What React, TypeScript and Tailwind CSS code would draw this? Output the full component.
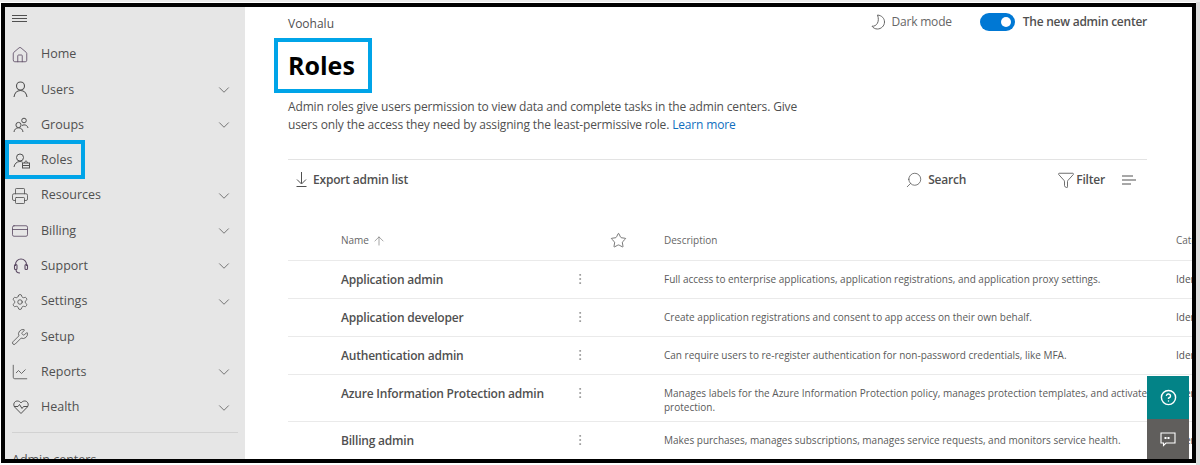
import { ArrowUp, ChevronDown, CircleHelp, CreditCard, Filter, Home, LineChart, MoreVertical, Printer, Search, Settings, Star, Wrench } from "lucide-react"
import type { ReactNode } from "react"

const font = "font-['Open_Sans',sans-serif]"

function UserIcon() {
  return (
    <svg width="16" height="17" viewBox="0 0 16 17" fill="none" stroke="currentColor" strokeWidth="1.100">
      <circle cx="7.500" cy="5" r="4" />
      <path d="M1 16c.4-3.800 3-6.500 6.500-6.500S13.600 12.200 14 16" />
    </svg>
  )
}

function GroupsIcon() {
  return (
    <svg width="16" height="16" viewBox="0 0 16 16" fill="none" stroke="currentColor" strokeWidth="1">
      <circle cx="5.500" cy="8" r="2.600" />
      <path d="M1 15c.3-2.600 2-4.200 4.500-4.200S9.700 12.400 10 15" />
      <circle cx="11" cy="3.500" r="2.300" />
      <path d="M9 8.500c2.800-1.400 5.400-.3 6 2.500" />
    </svg>
  )
}

function RolesIcon() {
  return (
    <svg width="18" height="16" viewBox="0 0 18 16" fill="none" stroke="currentColor" strokeWidth="1">
      <circle cx="7" cy="4.500" r="3.500" />
      <path d="M1 14c.5-3.200 2.700-5.500 6-5.500 1 0 1.800.2 2.500.6" />
      <rect x="9.500" y="10" width="7" height="5" />
      <path d="M9.500 12.500h7" />
      <path d="M11.500 10c0-2.500 3-2.500 3 0" />
    </svg>
  )
}

function SupportIcon() {
  return (
    <svg width="16" height="17" viewBox="0 0 16 17" fill="none" stroke="#5b4a63" strokeWidth="1.100">
      <path d="M2.500 8V6.500a5.500 5.500 0 0 1 11 0V8" />
      <rect x="1.500" y="6.500" width="2.500" height="5" rx="1" />
      <rect x="12" y="6.500" width="2.500" height="5" rx="1" />
      <path d="M3 11.500c0 2.500 1.500 3.500 4 3.500" />
    </svg>
  )
}

function HealthIcon() {
  return (
    <svg width="16" height="15" viewBox="0 0 16 15" fill="none" stroke="currentColor" strokeWidth="1">
      <path d="M8 13.500 1.800 7.200C-.4 4.600 1.300 1 4.300 1 6 1 7.200 1.900 8 3c.8-1.100 2-2 3.700-2 3 0 4.700 3.600 2.500 6.200z" />
      <path d="M1 6.500h4l1.500-2 2.500 4 1.500-2H15" />
    </svg>
  )
}

function MoonIcon() {
  return (
    <svg width="15" height="16" viewBox="0 0 15 16" fill="none" stroke="currentColor" strokeWidth="1">
      <path d="M6.500 1c4.500.5 7 3.500 7 7 0 4-3.500 7-7 7-2.300 0-4.300-1-5.500-2.800 4.500.5 8-4.500 5.500-11.200z" />
    </svg>
  )
}

function FeedbackIcon() {
  return (
    <svg width="16" height="16" viewBox="0 0 16 16" fill="none" stroke="white" strokeWidth="1.100">
      <path d="M1 2h14v10H6l-2.500 2.500V12H1z" />
      <path d="M5.500 6v2M8.500 6v2" strokeWidth="2" />
    </svg>
  )
}

function HamburgerIcon() {
  return (
    <svg width="15" height="8" viewBox="0 0 15 8" stroke="currentColor" strokeWidth="1">
      <path d="M0 .5h15M0 3.500h15M0 6.500h15" />
    </svg>
  )
}

function SortIcon() {
  return (
    <svg width="15" height="10" viewBox="0 0 15 10" stroke="currentColor" strokeWidth="1">
      <path d="M0 1h11M0 5h14M0 9h9" />
    </svg>
  )
}

function ExportIcon() {
  return (
    <svg width="11" height="15" viewBox="0 0 11 15" fill="none" stroke="currentColor" strokeWidth="1">
      <path d="M5.500 0v11.500M1 7.500l4.500 4.500L10 7.500M.5 14.500h10" />
    </svg>
  )
}

const icon = { size: 18, strokeWidth: 1.1 }

const navItems: { label: string; icon: ReactNode; chevron?: boolean }[] = [
  { label: "Home", icon: <Home {...icon} className="-ml-[2px] text-[#5b4a63]" /> },
  { label: "Users", icon: <UserIcon />, chevron: true },
  { label: "Groups", icon: <GroupsIcon />, chevron: true },
  { label: "Roles", icon: <RolesIcon /> },
  { label: "Resources", icon: <Printer {...icon} className="-ml-[2px]" />, chevron: true },
  { label: "Billing", icon: <CreditCard {...icon} className="-ml-[2px] text-[#5b4a63]" />, chevron: true },
  { label: "Support", icon: <SupportIcon />, chevron: true },
  { label: "Settings", icon: <Settings {...icon} className="-ml-[2px]" />, chevron: true },
  { label: "Setup", icon: <Wrench {...icon} className="-ml-[2px]" /> },
  { label: "Reports", icon: <LineChart {...icon} className="-ml-[2px]" />, chevron: true },
  { label: "Health", icon: <HealthIcon />, chevron: true },
]

const rows = [
  { name: "Application admin", desc: "Full access to enterprise applications, application registrations, and application proxy settings.", h: "h-[38px]" },
  { name: "Application developer", desc: "Create application registrations and consent to app access on their own behalf.", h: "h-[38px]" },
  { name: "Authentication admin", desc: "Can require users to re-register authentication for non-password credentials, like MFA.", h: "h-[38px]" },
  { name: "Azure Information Protection admin", desc: "Manages labels for the Azure Information Protection policy, manages protection templates, and activate protection.", h: "h-[47px]" },
  { name: "Billing admin", desc: "Makes purchases, manages subscriptions, manages service requests, and monitors service health.", h: "h-[38px]" },
]

function Sidebar() {
  return (
    <aside className="flex w-[240px] shrink-0 flex-col bg-[#e6e6e6] text-[#505050]">
      <div className="flex h-[30px] shrink-0 items-center pb-[6px] pl-[7px]">
        <HamburgerIcon />
      </div>
      {navItems.map((item) => (
        <div key={item.label} className="relative flex h-[35.3px] shrink-0 items-center pl-[8px] pr-[12px]">
          <span className="flex w-[28px] shrink-0">{item.icon}</span>
          <span className="flex-1 text-[12.5px]">{item.label}</span>
          {item.chevron && <ChevronDown size={18} strokeWidth={1} />}
          {item.label === "Roles" && <span className="absolute left-0 top-[-3px] h-[39px] w-[80px] border-[4px] border-[#00a4e8]" />}
        </div>
      ))}
      <div className="mx-[7px] mt-[7px] shrink-0 border-t border-[#d2d2d2]" />
      <div className="mt-[18px] shrink-0 pl-[7px] text-[12.5px]">Admin centers</div>
    </aside>
  )
}

function RoleTable() {
  return (
    <div className="mt-[22px] text-[#505050]">
      <div className="grid h-[40px] grid-cols-[53px_270px_53px_512px_1fr] items-center border-b border-[#eaeaea] text-[10px] text-[#666]">
        <span />
        <span className="flex items-center gap-[3px]">Name <ArrowUp size={14} strokeWidth={1} /></span>
        <Star size={17} strokeWidth={1} className="-ml-[1px] text-[#444]" />
        <span>Description</span>
        <span>Category</span>
      </div>
      {rows.map((row) => (
        <div key={row.name} className={`grid ${row.h} grid-cols-[53px_235px_88px_512px_1fr] items-start border-b border-[#eaeaea]`}>
          <span />
          <span className="pt-[11px] text-[12px] leading-[16px] font-semibold tracking-[-0.2px]">{row.name}</span>
          <span className="pt-[11px]"><MoreVertical size={14} strokeWidth={1} className="-ml-[3px] text-[#777]" /></span>
          <span className="pr-[6px] pt-[11px] text-[10px] leading-[14px] text-[#5a5a5a]">{row.desc}</span>
          <span className="overflow-hidden pt-[11px] text-[10px] leading-[14px]">Identity</span>
        </div>
      ))}
    </div>
  )
}

export default function App() {
  return (
    <div className={`${font} flex h-[465px] w-[1200px] overflow-hidden border-t-[2px] border-[#ececec] bg-white`}>
      <div className="ml-[1px] mt-[1px] flex h-[460px] w-[1195px] shrink-0 overflow-hidden border-[4px] border-black">
        <Sidebar />
        <main className="relative min-w-0 flex-1 pl-[43px] text-[#505050]">
          <div className="flex h-[29px] items-center pr-[45px]">
            <span className="mt-[4px] flex-1 text-[12px] font-medium">Voohalu</span>
            <span className="flex items-center gap-[6px] text-[12px] tracking-[-0.2px] text-[#666]"><MoonIcon /> Dark mode</span>
            <span className="ml-[28px] flex h-[18px] w-[35px] items-center justify-end rounded-full bg-[#0078d4] pr-[4px]">
              <span className="size-[10px] rounded-full bg-white" />
            </span>
            <span className="ml-[8px] text-[12px] font-semibold tracking-[-0.25px]">The new admin center</span>
          </div>
          <h1 className="relative mt-[10px] flex h-[39px] items-center text-[25px] font-bold text-black">
            Roles
            <span className="absolute -left-[14px] -top-[8px] h-[55px] w-[98px] border-[4px] border-[#00a4e8]" />
          </h1>
          <p className="mt-[13px] w-[512px] text-[12px] leading-[18px] tracking-[-0.15px]">
            Admin roles give users permission to view data and complete tasks in the admin centers. Give users only the access they need by assigning the least-permissive role. <span className="text-[#106ebe]">Learn more</span>
          </p>
          <div className="mr-[45px] mt-[25px] flex h-[40px] items-center border-t border-[#e3e3e3] pl-[8px] pr-[10px] text-[12px] font-semibold tracking-[-0.2px]">
            <ExportIcon />
            <span className="ml-[6px] flex-1">Export admin list</span>
            <Search size={18} strokeWidth={1} className="-scale-x-100" />
            <span className="ml-[5px]">Search</span>
            <Filter size={18} strokeWidth={1.100} className="ml-[91px]" />
            <span className="ml-[1px]">Filter</span>
            <span className="ml-[17px]"><SortIcon /></span>
          </div>
          <RoleTable />
          <div className="absolute bottom-0 right-[3px] flex w-[42px] flex-col">
            <button className="flex h-[43px] items-center justify-center bg-[#038387] text-white"><CircleHelp size={17} strokeWidth={2} /></button>
            <button className="flex h-[40px] items-center justify-center bg-[#605e5c]"><FeedbackIcon /></button>
          </div>
        </main>
      </div>
      <div className="w-[4px] bg-[#dcdcdc]" />
    </div>
  )
}
